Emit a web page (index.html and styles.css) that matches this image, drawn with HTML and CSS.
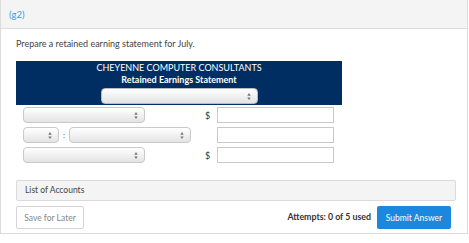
FILE: index.html
```html
<!DOCTYPE html>
<html>
<head>
<meta charset="utf-8">
<link rel="stylesheet" href="styles.css">
</head>
<body>
<div class="panel">
  <div class="panel-head"><span class="qid">(g2)</span></div>
  <div class="panel-body">
    <p class="prompt">Prepare a retained earning statement for July.</p>
    <div class="stmt">
      <div class="stmt-head">
        <div class="co">CHEYENNE COMPUTER CONSULTANTS</div>
        <div class="title">Retained Earnings Statement</div>
        <div class="sel sel-head"><svg class="arr" viewBox="0 0 4 8"><path d="M2 0 L4 3 L0 3 Z M0 5 L4 5 L2 8 Z"/></svg></div>
      </div>
      <div class="row">
        <div class="left"><div class="sel sel-wide"><svg class="arr" viewBox="0 0 4 8"><path d="M2 0 L4 3 L0 3 Z M0 5 L4 5 L2 8 Z"/></svg></div></div>
        <div class="cur">$</div>
        <div class="inp"></div>
      </div>
      <div class="row">
        <div class="left"><div class="sel sel-small"><svg class="arr" viewBox="0 0 4 8"><path d="M2 0 L4 3 L0 3 Z M0 5 L4 5 L2 8 Z"/></svg></div><span class="colon">:</span><div class="sel sel-mid"><svg class="arr" viewBox="0 0 4 8"><path d="M2 0 L4 3 L0 3 Z M0 5 L4 5 L2 8 Z"/></svg></div></div>
        <div class="cur"></div>
        <div class="inp"></div>
      </div>
      <div class="row">
        <div class="left"><div class="sel sel-wide"><svg class="arr" viewBox="0 0 4 8"><path d="M2 0 L4 3 L0 3 Z M0 5 L4 5 L2 8 Z"/></svg></div></div>
        <div class="cur">$</div>
        <div class="inp"></div>
      </div>
    </div>
    <div class="accounts">List of Accounts</div>
    <div class="actions">
      <button class="btn-save">Save for Later</button>
      <div class="right">
        <span class="attempts">Attempts: 0 of 5 used</span>
        <button class="btn-submit">Submit Answer</button>
      </div>
    </div>
  </div>
</div>
</body>
</html>
```
FILE: styles.css
```css
* { box-sizing: border-box; }
body {
  margin: 0;
  font-family: Lato, "Open Sans", sans-serif;
  color: #333;
}
.panel {
  width: 468px;
  height: 234px;
  border: 1px solid #dcdcdc;
  border-top: none;
}
.panel-head {
  height: 29px;
  background: #f4f4f4;
  border-bottom: 1px solid #dcdcdc;
  display: flex;
  align-items: center;
  padding-left: 8px;
}
.qid {
  color: #3b9be0;
  font-size: 9.5px;
}
.panel-body {
  padding: 0 11px 0 15px;
}
.prompt {
  margin: 9px 0 0;
  font-size: 9px;
  color: #444;
  line-height: 11px;
}
.stmt {
  width: 326px;
  margin-top: 12px;
}
.stmt-head {
  background: #002e63;
  color: #fff;
  height: 44px;
  padding-top: 1px;
  display: flex;
  flex-direction: column;
  align-items: center;
  font-size: 9px;
  line-height: 12px;
}
.co { font-weight: 400; }
.title { font-weight: 700; line-height: 11px; }
.sel {
  position: relative;
  height: 16px;
  border: 1px solid #c9c9c9;
  border-radius: 4px;
  background: linear-gradient(#ffffff, #e4e4e4);
}
.arr {
  position: absolute;
  right: 6px;
  top: 4px;
  width: 4px;
  height: 7px;
  fill: #777;
}
.sel-head { width: 157px; margin-top: 3px; border-color: #b8bcc4; }
.row {
  display: flex;
  align-items: center;
  height: 20px;
  padding-left: 7px;
}
.left {
  width: 182px;
  display: flex;
  align-items: center;
}
.sel-wide { width: 122px; }
.sel-small { width: 36px; }
.sel-mid { width: 122px; }
.colon { width: 10px; text-align: center; font-size: 8px; color: #555; }
.cur {
  width: 12px;
  font-size: 9px;
  color: #333;
}
.inp {
  width: 117px;
  height: 16px;
  border: 1px solid #c8c8c8;
  background: #fff;
}
.accounts {
  margin-top: 15px;
  height: 21px;
  background: #f4f4f4;
  border: 1px solid #dadada;
  border-radius: 2px;
  font-size: 8.5px;
  line-height: 19px;
  padding-left: 8px;
  color: #444;
}
.actions {
  margin-top: 5px;
  display: flex;
  justify-content: space-between;
  align-items: center;
  padding-right: 5px;
}
.right { display: flex; align-items: center; gap: 6px; }
.btn-save {
  width: 68px;
  height: 23px;
  background: #fff;
  border: 1px solid #d4d4d4;
  border-radius: 2px;
  color: #888;
  font-family: inherit;
  font-size: 8.5px;
  padding: 0;
}
.attempts {
  font-size: 8.8px;
  color: #333;
  font-weight: 700;
  margin-top: -2px;
}
.btn-submit {
  width: 74px;
  height: 23px;
  background: #1b87de;
  border: none;
  border-radius: 2px;
  color: #fff;
  font-family: inherit;
  font-size: 8.5px;
  padding: 0;
}
```
